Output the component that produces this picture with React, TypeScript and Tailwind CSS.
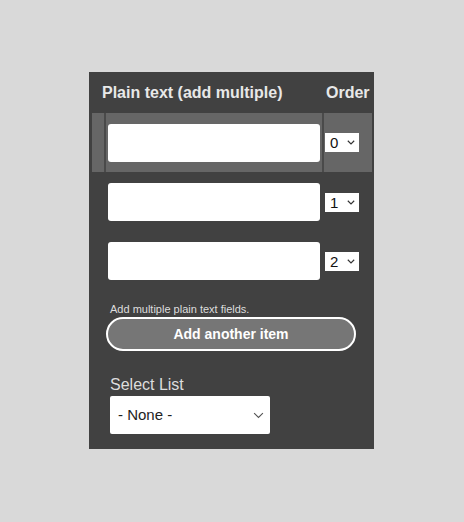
import React from 'react';

const Chevron = ({ className, width = 1 }: { className?: string; width?: number }) => (
  <svg className={className} viewBox="0 0 10 6" fill="none" stroke="currentColor" strokeWidth={width}>
    <path d="M1 0.8l4 4 4-4" />
  </svg>
);

function OrderSelect({ value }: { value: number }) {
  return (
    <div className="flex items-center w-[34px] h-[19px] bg-white pl-[5px] text-[15px] leading-none text-[#111]">
      <span className="w-[17px]">{value}</span>
      <Chevron className="w-[8px] h-[5px] text-[#333]" width={1.4} />
    </div>
  );
}

function Row({ order, active }: { order: number; active?: boolean }) {
  return (
    <div className={`flex h-[59px] ${active ? 'bg-[#666666]' : 'pt-[1px]'}`}>
      <div className={`w-[14px] shrink-0 border-r-2 ${active ? 'border-[#4a4a4a]' : 'border-transparent'}`} />
      <div className="w-[216px] shrink-0 flex items-center px-[2px]">
        <div className="w-[212px] h-[38px] bg-white rounded-[3px]" />
      </div>
      <div className={`flex-1 flex items-center pl-[1px] border-l-2 ${active ? 'border-[#4a4a4a]' : 'border-transparent'}`}>
        <OrderSelect value={order} />
      </div>
    </div>
  );
}

export default function App() {
  return (
    <div
      className="w-[464px] h-[522px] bg-[#d9d9d9] pt-[72px] pl-[89px]"
      style={{ fontFamily: '"Liberation Sans", Arial, sans-serif' }}
    >
      <div className="w-[285px] h-[377px] bg-[#414141] pl-[3px] pr-[2px]">
        <div className="flex items-center h-[41px] text-[16px] font-bold text-[#e8e8e8]">
          <span className="pl-[10px] w-[234px]">Plain text (add multiple)</span>
          <span>Order</span>
        </div>
        <Row order={0} active />
        <Row order={1} />
        <Row order={2} />
        <div className="pl-[18px] mt-[12px] text-[11px] leading-[14px] text-[#dddddd]">
          Add multiple plain text fields.
        </div>
        <button className="ml-[14px] mt-[1px] w-[250px] h-[34px] rounded-full border-2 border-white bg-[#767676] text-white text-[14px] font-bold">
          Add another item
        </button>
        <div className="pl-[18px] mt-[25px] text-[16px] leading-[18px] text-[#dddddd]">Select List</div>
        <div className="ml-[18px] mt-[2px] w-[160px] h-[38px] bg-white rounded-[2px] flex items-center justify-between pl-[8px] pr-[6px] text-[15px] text-[#222]">
          <span>- None -</span>
          <Chevron className="w-[11px] h-[7px] text-[#555]" />
        </div>
      </div>
    </div>
  );
}
